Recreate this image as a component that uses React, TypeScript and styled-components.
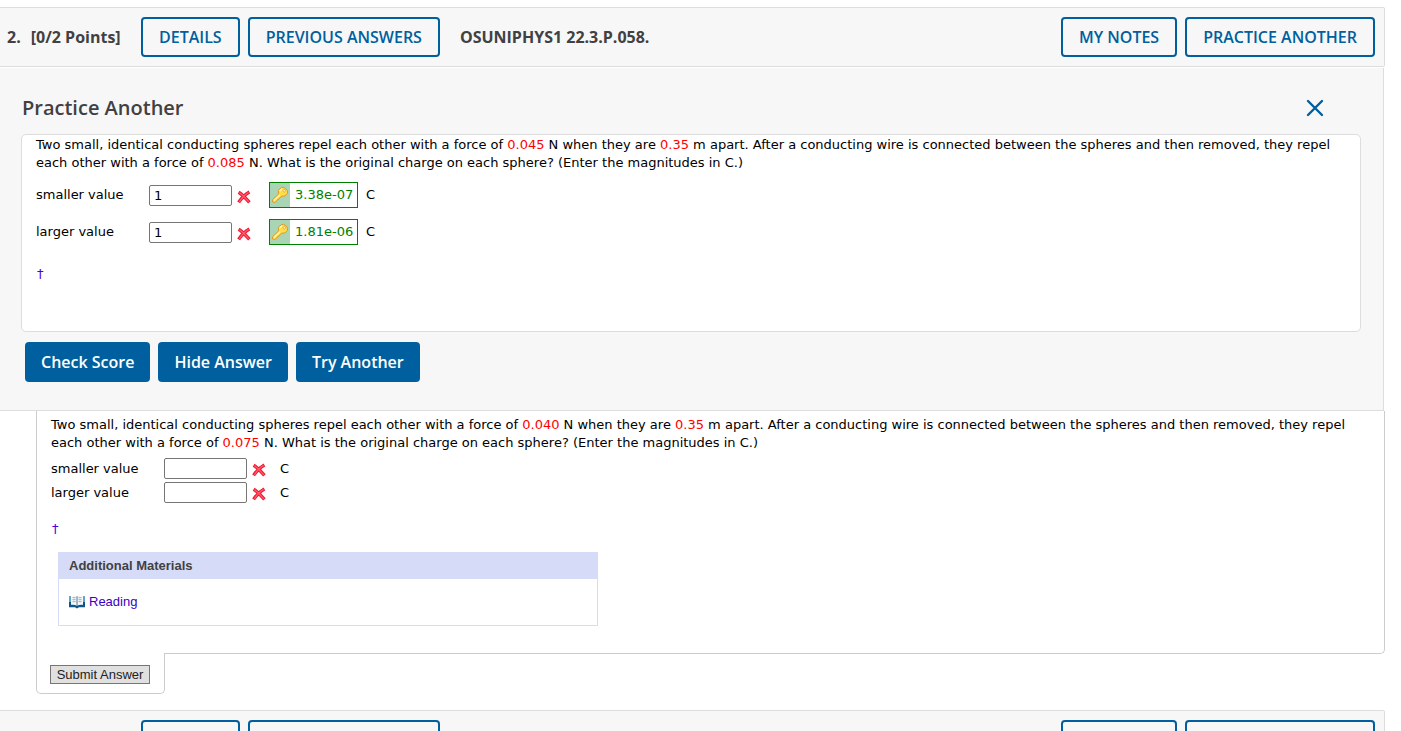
import React from "react";
import styled, { createGlobalStyle } from "styled-components";

const blue = "#005f9e";
const verdana = 'Verdana, "DejaVu Sans", sans-serif';
const openSans = '"Open Sans", sans-serif';
const arial = 'Arial, "Liberation Sans", sans-serif';

const GlobalStyle = createGlobalStyle`
  * { box-sizing: border-box; }
  body { margin: 0; background: #fff; color: #000; font: 13px/18px ${verdana}; }
`;

const Page = styled.main`
  height: 100vh;
  overflow: hidden;
  padding: 7px 16px 0 0;
`;

const QuestionHeader = styled.header`
  display: flex;
  align-items: center;
  gap: 8px;
  height: 60px;
  padding: 0 9px 0 7px;
  background: #f7f7f7;
  border: 1px solid #ddd;
  border-left: 0;
  border-radius: 0 2px 2px 0;
  color: #414042;
  font: 700 16px/24px ${openSans};
  white-space: nowrap;
`;

const Points = styled.div`
  width: 126px;
  display: flex;
  gap: 10px;
`;

const Code = styled.div`
  flex: 1;
  padding-left: 12px;
`;

const OutlineButton = styled.button`
  height: 40px;
  padding: 0 16px;
  background: #f7f7f7;
  border: 2px solid ${blue};
  border-radius: 4px;
  color: ${blue};
  font: 600 16px/24px ${openSans};
  white-space: nowrap;
`;

const PracticePanel = styled.section`
  margin: 1px 1px 0 0;
  padding: 26px 22px 28px 21px;
  background: #f7f7f7;
  border-right: 1px solid #ddd;
  border-bottom: 1px solid #ddd;
`;

const PanelHead = styled.div`
  display: flex;
  align-items: center;
  justify-content: space-between;
  height: 28px;
  margin-bottom: 12px;
  padding: 0 37px 0 1px;
`;

const PanelTitle = styled.h2`
  margin: 0;
  color: #414042;
  font: 600 20px/28px ${openSans};
`;

const CloseButton = styled.button`
  display: flex;
  padding: 0;
  border: 0;
  background: none;
`;

const Card = styled.div`
  height: 198px;
  padding: 1px 14px;
  background: #fff;
  border: 1px solid #ddd;
  border-radius: 5px;
`;

const Prompt = styled.p`
  margin: 0;
`;

const Value = styled.span`
  color: #f00;
`;

const Fields = styled.div<{ $gap: number; $top: number }>`
  display: flex;
  flex-direction: column;
  gap: ${(p) => p.$gap}px;
  margin-top: ${(p) => p.$top}px;
`;

const FieldRow = styled.div`
  display: flex;
  align-items: center;
`;

const FieldLabel = styled.label`
  width: 113px;
`;

const FieldInput = styled.input`
  width: 83px;
  height: 21px;
  padding: 0 4px;
  border: 1px solid #767676;
  border-radius: 2px;
  background: #fff;
  font: 13px/18px ${verdana};
`;

const Mark = styled.span<{ $gap: number }>`
  display: flex;
  margin: 3px ${(p) => p.$gap}px 0 5px;
`;

const AnswerKey = styled.span`
  display: flex;
  align-items: center;
  width: 89px;
  height: 26px;
  margin-right: 8px;
  border: 1px solid #008000;
  color: #008000;
  white-space: nowrap;
`;

const KeyIconBox = styled.span`
  display: flex;
  align-items: center;
  justify-content: center;
  width: 20px;
  height: 24px;
  margin-right: 5px;
  background: #aad5b5;
`;

const Dagger = styled.a<{ $top: number }>`
  display: block;
  width: 10px;
  margin-top: ${(p) => p.$top}px;
  padding-left: 1px;
  color: #4b00e0;
  font-size: 13px;
  text-decoration: none;
`;

const Actions = styled.div`
  display: flex;
  gap: 8px;
  padding: 10px 4px 0;
`;

const SolidButton = styled.button`
  height: 40px;
  padding: 0 16px;
  border: 0;
  border-radius: 4px;
  background: ${blue};
  color: #fff;
  font: 600 16px/24px ${openSans};
  white-space: nowrap;
`;

const Question = styled.section`
  margin-left: 36px;
  height: 243px;
  padding: 5px 14px 0;
  background: #fff;
  border: 1px solid #ccc;
  border-top: 0;
  border-radius: 0 0 5px 0;
`;

const Materials = styled.div`
  width: 540px;
  max-width: 100%;
  margin: 14px 0 0 7px;
  border: 1px solid #d6dcf7;
  font-family: ${arial};
`;

const MaterialsTitle = styled.h3`
  margin: 0;
  padding: 4px 10px;
  background: #d6dcf7;
  color: #414042;
  font: 700 13px/18px ${arial};
`;

const MaterialsBody = styled.div`
  padding: 14px 10px;
`;

const ReadingLink = styled.a`
  display: flex;
  align-items: center;
  gap: 4px;
  color: #3a00c0;
  text-decoration: none;
`;

const SubmitTab = styled.div`
  width: 129px;
  height: 41px;
  margin: -1px 0 16px 36px;
  padding: 12px 13px 0;
  background: #fff;
  border: 1px solid #ccc;
  border-top: 0;
  border-radius: 0 0 5px 5px;
`;

const SubmitButton = styled.button`
  display: block;
  width: 100px;
  height: 19px;
  padding: 0;
  border: 1px solid #767676;
  background: #e0e0e0;
  color: #222;
  font: 13px/16px ${arial};
  white-space: nowrap;
`;

const CrossIcon = () => (
  <svg width="14" height="14" viewBox="0 0 14 14" role="img" aria-label="Incorrect">
    <path d="M1.6 2.2Q5.5 4.5 12.4 12.4M12.4 2Q6.5 5.2 1.6 12.4" fill="none" stroke="#f01c34" strokeWidth="3.4" />
    <path d="M2.4 2.8Q5.5 4.8 11.8 11.8M11.6 2.6Q6.5 5.5 2.4 11.8" fill="none" stroke="#ff5f70" strokeWidth="1.2" />
  </svg>
);

const KeyIcon = () => (
  <svg width="18" height="18" viewBox="0 0 18 18" aria-hidden="true">
    <path
      d="M7.2 4.5 10.3 1.7 12.7 1.3 16.3 4.2 16.5 7.3 13.8 10 10.8 10.2 9.3 11.2 8.4 12.9 6.6 13.4 5.7 15.3 3.5 16.5 1.5 15.8 1.6 13.7 7.8 7.7Z"
      fill="#ffdf48"
      stroke="#e0962a"
      strokeLinejoin="round"
    />
    <path d="M8.5 5 11 2.8M3 14.5 9 8.8" fill="none" stroke="#fff5a8" strokeWidth="1.2" />
    <circle cx="13.2" cy="4.8" r="1.2" fill="#fff" stroke="#d99a1d" strokeWidth=".7" />
  </svg>
);

const CloseIcon = () => (
  <svg width="18" height="18" viewBox="0 0 18 18" aria-hidden="true">
    <path d="M2 2 16 16M16 2 2 16" stroke={blue} strokeWidth="2.4" strokeLinecap="round" />
  </svg>
);

const BookIcon = () => (
  <svg width="16" height="14" viewBox="0 0 16 14" aria-hidden="true">
    <path d="M0 1.5H16V12.2H10L8 13.4 6 12.2H0Z" fill="#0f5688" />
    <path d="M0 1.5H2V7H0ZM14 1.5H16V7H14Z" fill="#5fa3d0" />
    <path d="M2 .8Q5.5 0 8 1.3 10.5 0 14 .8V9.8Q10.5 9.2 8 10.8 5.5 9.2 2 9.8Z" fill="#f5f7f9" />
    <path d="M8 1.3V10.8" stroke="#4f7896" />
    <path d="M3.5 2.7H6.5M3.5 4.7H6.5M3.5 6.7H6.5M9.5 2.7H12.5M9.5 4.7H12.5M9.5 6.7H12.5" stroke="#a4abb0" />
  </svg>
);

type HeaderProps = { number: string; code: string };

const Header = ({ number, code }: HeaderProps) => (
  <QuestionHeader>
    <Points>
      <span>{number}</span>
      <span>[0/2 Points]</span>
    </Points>
    <OutlineButton>DETAILS</OutlineButton>
    <OutlineButton>PREVIOUS ANSWERS</OutlineButton>
    <Code>{code}</Code>
    <OutlineButton>MY NOTES</OutlineButton>
    <OutlineButton>PRACTICE ANOTHER</OutlineButton>
  </QuestionHeader>
);

const Problem = ({ before, after }: { before: string; after: string }) => (
  <Prompt>
    Two small, identical conducting spheres repel each other with a force of <Value>{before}</Value> N when they are{" "}
    <Value>0.35</Value> m apart. After a conducting wire is connected between the spheres and then removed, they repel
    each other with a force of <Value>{after}</Value> N. What is the original charge on each sphere? (Enter the
    magnitudes in C.)
  </Prompt>
);

type FieldProps = { id: string; label: string; value?: string; answer?: string };

const Field = ({ id, label, value = "", answer }: FieldProps) => (
  <FieldRow>
    <FieldLabel htmlFor={id}>{label}</FieldLabel>
    <FieldInput id={id} defaultValue={value} />
    <Mark $gap={answer ? 18 : 14}>
      <CrossIcon />
    </Mark>
    {answer && (
      <AnswerKey>
        <KeyIconBox>
          <KeyIcon />
        </KeyIconBox>
        {answer}
      </AnswerKey>
    )}
    <span>C</span>
  </FieldRow>
);

export default function App() {
  return (
    <>
      <GlobalStyle />
      <Page>
        <Header number="2." code="OSUNIPHYS1 22.3.P.058." />
        <PracticePanel>
          <PanelHead>
            <PanelTitle>Practice Another</PanelTitle>
            <CloseButton aria-label="Close">
              <CloseIcon />
            </CloseButton>
          </PanelHead>
          <Card>
            <Problem before="0.045" after="0.085" />
            <Fields $gap={11} $top={10}>
              <Field id="practice-smaller" label="smaller value" value="1" answer="3.38e-07" />
              <Field id="practice-larger" label="larger value" value="1" answer="1.81e-06" />
            </Fields>
            <Dagger href="#practice-note" $top={20}>†</Dagger>
          </Card>
          <Actions>
            <SolidButton>Check Score</SolidButton>
            <SolidButton>Hide Answer</SolidButton>
            <SolidButton>Try Another</SolidButton>
          </Actions>
        </PracticePanel>
        <Question>
          <Problem before="0.040" after="0.075" />
          <Fields $gap={3} $top={6}>
            <Field id="smaller" label="smaller value" />
            <Field id="larger" label="larger value" />
          </Fields>
          <Dagger href="#note" $top={17}>†</Dagger>
          <Materials>
            <MaterialsTitle>Additional Materials</MaterialsTitle>
            <MaterialsBody>
              <ReadingLink href="#reading">
                <BookIcon />
                Reading
              </ReadingLink>
            </MaterialsBody>
          </Materials>
        </Question>
        <SubmitTab>
          <SubmitButton>Submit Answer</SubmitButton>
        </SubmitTab>
        <Header number="3." code="OSUNIPHYS1 22.3.P.059." />
      </Page>
    </>
  );
}
